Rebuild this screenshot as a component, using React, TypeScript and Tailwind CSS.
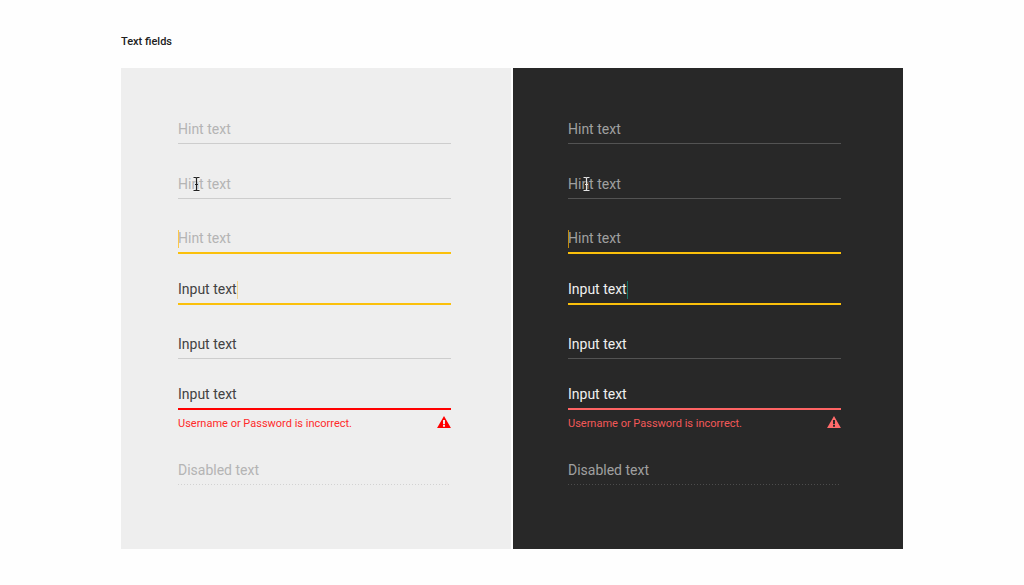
import { useId } from "react";
import { clsx } from "clsx";

type Theme = "light" | "dark";

type Field = {
  label: string;
  placeholder?: string;
  value?: string;
  state: "rest" | "focus" | "error" | "disabled";
  space: string;
  caret?: "start" | "end";
  hovered?: boolean;
  error?: string;
};

const fields: Field[] = [
  { label: "Resting", placeholder: "Hint text", state: "rest", space: "" },
  { label: "Hover", placeholder: "Hint text", state: "rest", space: "mt-[30px]", hovered: true },
  { label: "Press", placeholder: "Hint text", state: "focus", space: "mt-[29px]", caret: "start" },
  { label: "Focus", value: "Input text", state: "focus", space: "mt-[25px]", caret: "end" },
  { label: "Filled", value: "Input text", state: "rest", space: "mt-[29px]" },
  {
    label: "Error",
    value: "Input text",
    state: "error",
    space: "mt-[25px]",
    error: "Username or Password is incorrect.",
  },
  { label: "Disabled", value: "Disabled text", state: "disabled", space: "mt-7" },
];

const themes = {
  light: {
    panel: "bg-[#eeeeee] pl-[57px] pr-[60px]",
    input: "text-[#424242] placeholder:text-[#b4b4b4] disabled:text-[#b4b4b4]",
    rest: "bg-[#cdcdcd]",
    focus: "bg-[#fbc00b]",
    error: "bg-[#ff0000]",
    disabled: "bg-[repeating-linear-gradient(90deg,#d2d2d2_0_1px,transparent_1px_3px)]",
    errorText: "text-[#ff2a2a]",
    icon: "text-[#ff0000]",
    startCaret: "bg-[#fbc84a]",
    endCaret: "bg-[#f6d58a]",
    cursor: "#222222",
    halo: "#ffffff",
  },
  dark: {
    panel: "bg-[#282828] pl-[55px] pr-[62px]",
    input: "text-[#f0f0f0] placeholder:text-[#a0a0a0] disabled:text-[#a0a0a0]",
    rest: "bg-[#535353]",
    focus: "bg-[#fbc00b]",
    error: "bg-[#ff6464]",
    disabled: "bg-[repeating-linear-gradient(90deg,#4c4c4c_0_1px,transparent_1px_3px)]",
    errorText: "text-[#f25858]",
    icon: "text-[#ff6b6b]",
    startCaret: "bg-[#c08a10]",
    endCaret: "bg-[#12776c]",
    cursor: "#e4e4e4",
    halo: "#282828",
  },
};

function TextCursor({ color, halo }: { color: string; halo: string }) {
  const d = "M1.5 1.5h2q1 0 1 1q0-1 1-1h2M4.5 2.5v11M3 8.5h3M1.5 14.5h2q1 0 1-1q0 1 1 1h2";
  return (
    <svg className="absolute top-0.5 left-3.5" width="9" height="16" viewBox="0 0 9 16" fill="none" aria-hidden="true">
      <path d={d} stroke={halo} strokeWidth="2.5" opacity="0.5" />
      <path d={d} stroke={color} strokeWidth="1.2" />
    </svg>
  );
}

function WarningIcon({ className }: { className: string }) {
  return (
    <svg className={className} width="14" height="12" viewBox="1 2 22 19" fill="currentColor" aria-hidden="true">
      <path fillRule="evenodd" d="M1 21h22L12 2 1 21zM10.4 8.5h3.2v6h-3.2zM10.4 16h3.2v3h-3.2z" />
    </svg>
  );
}

function TextField({ field, theme }: { field: Field; theme: Theme }) {
  const id = useId();
  const colors = themes[theme];

  return (
    <div className={field.space}>
      <div className="relative">
        <input
          id={id}
          type="text"
          aria-label={field.label}
          aria-invalid={field.state === "error"}
          aria-describedby={field.error ? `${id}-error` : undefined}
          placeholder={field.placeholder}
          defaultValue={field.value}
          disabled={field.state === "disabled"}
          className={clsx("block h-5 w-full bg-transparent text-sm leading-5 outline-none placeholder:opacity-100", colors.input)}
        />
        {field.hovered && <TextCursor color={colors.cursor} halo={colors.halo} />}
        {field.caret === "start" && <span className={clsx("absolute top-0.5 left-0 h-[18px] w-px", colors.startCaret)} />}
        {field.caret === "end" && <span className={clsx("absolute top-0.5 left-[59px] h-[18px] w-px", colors.endCaret)} />}
      </div>
      <div
        className={clsx(
          "mt-1",
          field.state === "focus" || field.state === "error" ? "h-0.5" : "h-px",
          colors[field.state],
        )}
      />
      {field.error && (
        <div className="mt-1.5 flex items-start justify-between">
          <p id={`${id}-error`} className={clsx("text-[11px] leading-4", colors.errorText)}>
            {field.error}
          </p>
          <WarningIcon className={colors.icon} />
        </div>
      )}
    </div>
  );
}

function Panel({ theme }: { theme: Theme }) {
  return (
    <section className={clsx("pt-[51px] pb-16", themes[theme].panel)}>
      {fields.map((field) => (
        <TextField key={field.label} field={field} theme={theme} />
      ))}
    </section>
  );
}

export default function App() {
  return (
    <main className="min-h-screen bg-[#fefefe] px-[121px] pt-[34px] pb-9 font-['Roboto',sans-serif]">
      <h1 className="text-[11px] leading-4 font-medium text-[#212121]">Text fields</h1>
      <div className="mt-[18px] grid grid-cols-2 gap-0.5">
        <Panel theme="light" />
        <Panel theme="dark" />
      </div>
    </main>
  );
}
